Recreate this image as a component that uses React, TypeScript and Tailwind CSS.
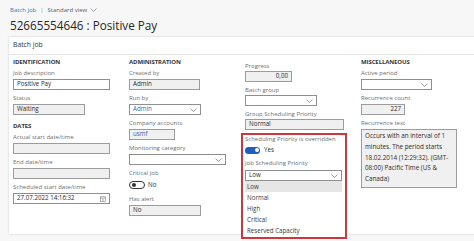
import React from 'react';

const Chevron = () => (
  <svg width="7" height="4" viewBox="0 0 7 4" className="shrink-0">
    <polyline points="0.5,0.5 3.5,3.5 6.5,0.5" fill="none" stroke="#7a7a7a" strokeWidth="0.7" />
  </svg>
);

const CalendarIcon = () => (
  <svg width="6" height="6" viewBox="0 0 6 6" className="shrink-0">
    <rect x="0.4" y="0.8" width="5.2" height="4.8" fill="none" stroke="#7a7a7a" strokeWidth="0.6" />
    <line x1="0.4" y1="2.1" x2="5.6" y2="2.1" stroke="#7a7a7a" strokeWidth="0.6" />
    <line x1="2" y1="3.3" x2="4" y2="3.3" stroke="#9a9a9a" strokeWidth="0.5" />
    <line x1="2" y1="4.4" x2="4" y2="4.4" stroke="#9a9a9a" strokeWidth="0.5" />
  </svg>
);

type InputProps = {
  value?: string;
  width: string;
  readOnly?: boolean;
  select?: boolean;
  calendar?: boolean;
  right?: boolean;
  link?: boolean;
  focus?: boolean;
};

const Input: React.FC<InputProps> = ({ value, width, readOnly, select, calendar, right, link, focus }) => (
  <div
    className={`${width} h-[11px] flex items-center px-[3px] border text-[6.2px] leading-none ${
      readOnly ? 'bg-[#f0f0f0] border-[#9c9c9c]' : 'bg-white border-[#8f8f8f]'
    } ${focus ? 'border-[#6f8fc8]' : ''} ${link ? 'text-[#3b62b5]' : 'text-[#2b2b2b]'}`}
  >
    <span className={`flex-1 whitespace-nowrap ${right ? 'text-right' : ''}`}>{value}</span>
    {select && <Chevron />}
    {calendar && <CalendarIcon />}
  </div>
);

const Label: React.FC<{ children: React.ReactNode }> = ({ children }) => (
  <div className="h-[8px] leading-[8px] text-[6px] text-[#6e6e6e] whitespace-nowrap">{children}</div>
);

const Header: React.FC<{ children: React.ReactNode }> = ({ children }) => (
  <div className="h-[8px] leading-[8px] text-[6px] font-bold text-[#333333] tracking-[-0.1px]">{children}</div>
);

const Field: React.FC<{ label: string } & InputProps> = ({ label, ...rest }) => (
  <div className="mb-[4px]">
    <Label>{label}</Label>
    <div className="mt-[2px]">
      <Input {...rest} />
    </div>
  </div>
);

const Toggle: React.FC<{ on?: boolean }> = ({ on }) =>
  on ? (
    <div className="w-[15px] h-[7px] rounded-full bg-[#1f5fbf] flex items-center justify-end px-[1.5px]">
      <div className="w-[4px] h-[4px] rounded-full bg-white" />
    </div>
  ) : (
    <div className="w-[16px] h-[8px] rounded-full border border-[#333333] bg-white flex items-center px-[1.5px]">
      <div className="w-[4px] h-[4px] rounded-full bg-[#333333]" />
    </div>
  );

const App: React.FC = () => {
  return (
    <div className="w-[474px] h-[241px] overflow-hidden bg-[#f7f7f7] font-['Open_Sans',sans-serif] text-[#2b2b2b]">
      {/* Breadcrumb */}
      <div className="pl-[10px] pt-[6px] h-[14px] flex items-center gap-[3px] text-[6px] leading-[8px]">
        <span className="text-[#3f6fc4]">Batch job</span>
        <span className="text-[#8a8a8a] px-[1px]">|</span>
        <span className="text-[#5a5a5a]">Standard view</span>
        <Chevron />
      </div>

      {/* Title */}
      <div className="pl-[10px] mt-[3px] h-[16px] leading-[16px] text-[11.7px] text-[#262626]">
        52665554646 : Positive Pay
      </div>

      {/* Card */}
      <div className="mt-[4px] ml-[9px] w-[480px] h-[197px] bg-white shadow-[0_0_2px_rgba(0,0,0,0.18)]">
        <div className="h-[18px] flex items-center pl-[4px] border-b border-[#e3e3e3] text-[6.8px] text-[#333333]">
          Batch job
        </div>

        <div className="grid grid-cols-[116px_116px_116px_116px] pl-[4px] pt-[3px]">
          {/* Identification + Dates */}
          <div>
            <Header>IDENTIFICATION</Header>
            <div className="mt-[3px]">
              <Field label="Job description" value="Positive Pay" width="w-[97px]" />
              <Field label="Status" value="Waiting" width="w-[72px]" readOnly />
            </div>
            <div className="mt-[7px]">
              <Header>DATES</Header>
            </div>
            <div className="mt-[3px]">
              <Field label="Actual start date/time" width="w-[97px]" readOnly />
              <Field label="End date/time" width="w-[97px]" readOnly />
              <Field label="Scheduled start date/time" value="27.07.2022 14:16:32" width="w-[97px]" calendar />
            </div>
          </div>

          {/* Administration */}
          <div>
            <Header>ADMINISTRATION</Header>
            <div className="mt-[3px]">
              <Field label="Created by" value="Admin" width="w-[71px]" readOnly />
              <Field label="Run by" value="Admin" width="w-[72px]" select link />
              <Field label="Company accounts" value="usmf" width="w-[46px]" readOnly link />
              <Field label="Monitoring category" width="w-[97px]" select />
              <div className="mb-[4px]">
                <Label>Critical Job</Label>
                <div className="mt-[2px] h-[12px] flex items-center gap-[3px]">
                  <Toggle />
                  <span className="text-[6.2px]">No</span>
                </div>
              </div>
              <Field label="Has alert" value="No" width="w-[72px]" readOnly />
            </div>
          </div>

          {/* Batch settings */}
          <div className="pt-[4px]">
            <div className="mb-[4px]">
              <Label>Progress</Label>
              <div className="mt-[1px]">
                <Input value="0,00" width="w-[47px]" readOnly right />
              </div>
            </div>
            <div className="mb-[4px]">
              <Label>Batch group</Label>
              <div className="mt-[1px]">
                <Input width="w-[72px]" select />
              </div>
            </div>
            <div>
              <Label>Group Scheduling Priority</Label>
              <div className="mt-[1px]">
                <Input value="Normal" width="w-[99px]" readOnly />
              </div>
            </div>

            <div className="relative mt-[3px] -ml-[4px] w-[106px] border-2 border-[#d3353d] pl-[2px] pb-[1px] bg-white">
              <Label>Scheduling Priority is overridden</Label>
              <div className="mt-[2px] h-[10px] flex items-center gap-[4px]">
                <Toggle on />
                <span className="text-[6.2px]">Yes</span>
              </div>
              <div className="mt-[4px]">
                <Label>Job Scheduling Priority</Label>
              </div>
              <div className="mt-[3px]">
                <Input value="Low" width="w-[97px]" select focus />
              </div>
              <div className="w-[97px] text-[6.2px] text-[#3a3a3a]">
                {['Low', 'Normal', 'High', 'Critical', 'Reserved Capacity'].map((item, i) => (
                  <div
                    key={item}
                    className={`h-[11px] leading-[11px] px-[2px] ${i === 0 ? 'bg-[#e6e6e6]' : 'bg-white'}`}
                  >
                    {item}
                  </div>
                ))}
              </div>
            </div>
          </div>

          {/* Miscellaneous */}
          <div>
            <Header>MISCELLANEOUS</Header>
            <div className="mt-[3px]">
              <Field label="Active period" width="w-[71px]" select />
              <Field label="Recurrence count" value="227" width="w-[44px]" readOnly right />
              <Label>Recurrence text</Label>
              <div className="mt-[2px] w-[96px] bg-[#f0f0f0] border border-[#9c9c9c] pl-[3px] pt-[1px] pb-[2px] text-[6.3px] leading-[10.8px] text-[#2b2b2b] whitespace-nowrap">
                Occurs with an interval of 1
                <br />
                minutes. The period starts
                <br />
                18.02.2014 (12:29:32). (GMT-
                <br />
                08:00) Pacific Time (US &amp;
                <br />
                Canada)
              </div>
            </div>
          </div>
        </div>
      </div>
    </div>
  );
};

export default App;
